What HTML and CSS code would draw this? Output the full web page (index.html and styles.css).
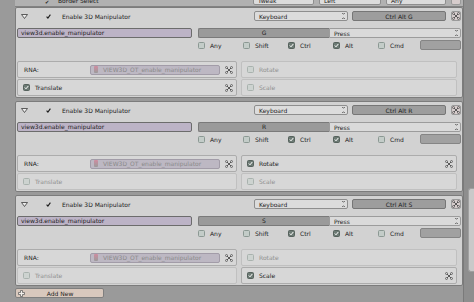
FILE: index.html
```html
<!DOCTYPE html>
<html lang="en">
  <head>
    <meta charset="UTF-8" />
    <title>Keymap Editor</title>
    <link rel="stylesheet" href="styles.css">
  </head>

  <body>
    <div class="editor">
      <div class="list">
        <div class="prev-row">
          <span class="prev-check">&#10004;</span>
          <span class="prev-name">Border Select</span>
          <span class="menu menu-tweak">Tweak</span>
          <span class="menu menu-left">Left</span>
          <span class="menu menu-any">Any</span>
          <span class="xbtn"></span>
        </div>

        <!-- item: translate -->
        <div class="item">
          <div class="item-head">
            <svg class="tri" width="7" height="5" viewBox="0 0 7 5"><polygon points="0.5,0.5 6.5,0.5 3.5,4.5" fill="#ededed" stroke="#3a3a3a" stroke-width="0.8"/></svg>
            <svg class="tick" width="5" height="5" viewBox="0 0 5 5"><path d="M0.6 2.6 L1.9 4.1 L4.4 0.6" fill="none" stroke="#1a1a1a" stroke-width="1.1"/></svg>
            <span class="item-name">Enable 3D Manipulator</span>
            <span class="menu menu-type">Keyboard<i class="updown"></i></span>
            <span class="btn btn-combo">Ctrl Alt G</span>
            <span class="xbtn"><svg width="8" height="8" viewBox="0 0 8 8"><path d="M2 2 L6 6 M6 2 L2 6" stroke="#4a4a4a" stroke-width="0.9"/><circle cx="1.5" cy="1.5" r="1" fill="none" stroke="#4a4a4a" stroke-width="0.7"/><circle cx="6.5" cy="1.5" r="1" fill="none" stroke="#4a4a4a" stroke-width="0.7"/><circle cx="1.5" cy="6.5" r="1" fill="none" stroke="#4a4a4a" stroke-width="0.7"/><circle cx="6.5" cy="6.5" r="1" fill="none" stroke="#4a4a4a" stroke-width="0.7"/></svg></span>
          </div>
          <div class="key-row">
            <span class="idname">view3d.enable_manipulator</span>
            <span class="keybtn">G</span>
            <span class="menu menu-press">Press<i class="updown"></i></span>
          </div>
          <div class="mods">
            <label class="opt"><i class="cb"></i>Any</label>
            <label class="opt"><i class="cb"></i>Shift</label>
            <label class="opt"><i class="cb on"></i>Ctrl</label>
            <label class="opt"><i class="cb on"></i>Alt</label>
            <label class="opt"><i class="cb"></i>Cmd</label>
            <span class="keymod"></span>
          </div>
          <div class="props">
            <div class="col col-left">
              <div class="prop">
                <span class="rna-label">RNA:</span>
                <span class="rna-field"><i class="op-icon"></i>VIEW3D_OT_enable_manipulator</span>
                <span class="xicon"><svg width="8" height="8" viewBox="0 0 8 8"><path d="M2 2 L6 6 M6 2 L2 6" stroke="#4a4a4a" stroke-width="0.9"/><circle cx="1.5" cy="1.5" r="1" fill="none" stroke="#4a4a4a" stroke-width="0.7"/><circle cx="6.5" cy="1.5" r="1" fill="none" stroke="#4a4a4a" stroke-width="0.7"/><circle cx="1.5" cy="6.5" r="1" fill="none" stroke="#4a4a4a" stroke-width="0.7"/><circle cx="6.5" cy="6.5" r="1" fill="none" stroke="#4a4a4a" stroke-width="0.7"/></svg></span>
              </div>
              <div class="prop">
                <label class="opt"><i class="cb on"></i>Translate</label>
                <span class="xicon"><svg width="8" height="8" viewBox="0 0 8 8"><path d="M2 2 L6 6 M6 2 L2 6" stroke="#4a4a4a" stroke-width="0.9"/><circle cx="1.5" cy="1.5" r="1" fill="none" stroke="#4a4a4a" stroke-width="0.7"/><circle cx="6.5" cy="1.5" r="1" fill="none" stroke="#4a4a4a" stroke-width="0.7"/><circle cx="1.5" cy="6.5" r="1" fill="none" stroke="#4a4a4a" stroke-width="0.7"/><circle cx="6.5" cy="6.5" r="1" fill="none" stroke="#4a4a4a" stroke-width="0.7"/></svg></span>
              </div>
            </div>
            <div class="col col-right">
              <div class="prop off"><label class="opt"><i class="cb"></i>Rotate</label></div>
              <div class="prop off"><label class="opt"><i class="cb"></i>Scale</label></div>
            </div>
          </div>
        </div>

        <!-- item: rotate -->
        <div class="item">
          <div class="item-head">
            <svg class="tri" width="7" height="5" viewBox="0 0 7 5"><polygon points="0.5,0.5 6.5,0.5 3.5,4.5" fill="#ededed" stroke="#3a3a3a" stroke-width="0.8"/></svg>
            <svg class="tick" width="5" height="5" viewBox="0 0 5 5"><path d="M0.6 2.6 L1.9 4.1 L4.4 0.6" fill="none" stroke="#1a1a1a" stroke-width="1.1"/></svg>
            <span class="item-name">Enable 3D Manipulator</span>
            <span class="menu menu-type">Keyboard<i class="updown"></i></span>
            <span class="btn btn-combo">Ctrl Alt R</span>
            <span class="xbtn"><svg width="8" height="8" viewBox="0 0 8 8"><path d="M2 2 L6 6 M6 2 L2 6" stroke="#4a4a4a" stroke-width="0.9"/><circle cx="1.5" cy="1.5" r="1" fill="none" stroke="#4a4a4a" stroke-width="0.7"/><circle cx="6.5" cy="1.5" r="1" fill="none" stroke="#4a4a4a" stroke-width="0.7"/><circle cx="1.5" cy="6.5" r="1" fill="none" stroke="#4a4a4a" stroke-width="0.7"/><circle cx="6.5" cy="6.5" r="1" fill="none" stroke="#4a4a4a" stroke-width="0.7"/></svg></span>
          </div>
          <div class="key-row">
            <span class="idname">view3d.enable_manipulator</span>
            <span class="keybtn">R</span>
            <span class="menu menu-press">Press<i class="updown"></i></span>
          </div>
          <div class="mods">
            <label class="opt"><i class="cb"></i>Any</label>
            <label class="opt"><i class="cb"></i>Shift</label>
            <label class="opt"><i class="cb on"></i>Ctrl</label>
            <label class="opt"><i class="cb on"></i>Alt</label>
            <label class="opt"><i class="cb"></i>Cmd</label>
            <span class="keymod"></span>
          </div>
          <div class="props">
            <div class="col col-left">
              <div class="prop">
                <span class="rna-label">RNA:</span>
                <span class="rna-field"><i class="op-icon"></i>VIEW3D_OT_enable_manipulator</span>
                <span class="xicon"><svg width="8" height="8" viewBox="0 0 8 8"><path d="M2 2 L6 6 M6 2 L2 6" stroke="#4a4a4a" stroke-width="0.9"/><circle cx="1.5" cy="1.5" r="1" fill="none" stroke="#4a4a4a" stroke-width="0.7"/><circle cx="6.5" cy="1.5" r="1" fill="none" stroke="#4a4a4a" stroke-width="0.7"/><circle cx="1.5" cy="6.5" r="1" fill="none" stroke="#4a4a4a" stroke-width="0.7"/><circle cx="6.5" cy="6.5" r="1" fill="none" stroke="#4a4a4a" stroke-width="0.7"/></svg></span>
              </div>
              <div class="prop off"><label class="opt"><i class="cb"></i>Translate</label></div>
            </div>
            <div class="col col-right">
              <div class="prop">
                <label class="opt"><i class="cb on"></i>Rotate</label>
                <span class="xicon"><svg width="8" height="8" viewBox="0 0 8 8"><path d="M2 2 L6 6 M6 2 L2 6" stroke="#4a4a4a" stroke-width="0.9"/><circle cx="1.5" cy="1.5" r="1" fill="none" stroke="#4a4a4a" stroke-width="0.7"/><circle cx="6.5" cy="1.5" r="1" fill="none" stroke="#4a4a4a" stroke-width="0.7"/><circle cx="1.5" cy="6.5" r="1" fill="none" stroke="#4a4a4a" stroke-width="0.7"/><circle cx="6.5" cy="6.5" r="1" fill="none" stroke="#4a4a4a" stroke-width="0.7"/></svg></span>
              </div>
              <div class="prop off"><label class="opt"><i class="cb"></i>Scale</label></div>
            </div>
          </div>
        </div>

        <!-- item: scale -->
        <div class="item">
          <div class="item-head">
            <svg class="tri" width="7" height="5" viewBox="0 0 7 5"><polygon points="0.5,0.5 6.5,0.5 3.5,4.5" fill="#ededed" stroke="#3a3a3a" stroke-width="0.8"/></svg>
            <svg class="tick" width="5" height="5" viewBox="0 0 5 5"><path d="M0.6 2.6 L1.9 4.1 L4.4 0.6" fill="none" stroke="#1a1a1a" stroke-width="1.1"/></svg>
            <span class="item-name">Enable 3D Manipulator</span>
            <span class="menu menu-type">Keyboard<i class="updown"></i></span>
            <span class="btn btn-combo">Ctrl Alt S</span>
            <span class="xbtn"><svg width="8" height="8" viewBox="0 0 8 8"><path d="M2 2 L6 6 M6 2 L2 6" stroke="#4a4a4a" stroke-width="0.9"/><circle cx="1.5" cy="1.5" r="1" fill="none" stroke="#4a4a4a" stroke-width="0.7"/><circle cx="6.5" cy="1.5" r="1" fill="none" stroke="#4a4a4a" stroke-width="0.7"/><circle cx="1.5" cy="6.5" r="1" fill="none" stroke="#4a4a4a" stroke-width="0.7"/><circle cx="6.5" cy="6.5" r="1" fill="none" stroke="#4a4a4a" stroke-width="0.7"/></svg></span>
          </div>
          <div class="key-row">
            <span class="idname">view3d.enable_manipulator</span>
            <span class="keybtn">S</span>
            <span class="menu menu-press">Press<i class="updown"></i></span>
          </div>
          <div class="mods">
            <label class="opt"><i class="cb"></i>Any</label>
            <label class="opt"><i class="cb"></i>Shift</label>
            <label class="opt"><i class="cb on"></i>Ctrl</label>
            <label class="opt"><i class="cb on"></i>Alt</label>
            <label class="opt"><i class="cb"></i>Cmd</label>
            <span class="keymod"></span>
          </div>
          <div class="props">
            <div class="col col-left">
              <div class="prop">
                <span class="rna-label">RNA:</span>
                <span class="rna-field"><i class="op-icon"></i>VIEW3D_OT_enable_manipulator</span>
                <span class="xicon"><svg width="8" height="8" viewBox="0 0 8 8"><path d="M2 2 L6 6 M6 2 L2 6" stroke="#4a4a4a" stroke-width="0.9"/><circle cx="1.5" cy="1.5" r="1" fill="none" stroke="#4a4a4a" stroke-width="0.7"/><circle cx="6.5" cy="1.5" r="1" fill="none" stroke="#4a4a4a" stroke-width="0.7"/><circle cx="1.5" cy="6.5" r="1" fill="none" stroke="#4a4a4a" stroke-width="0.7"/><circle cx="6.5" cy="6.5" r="1" fill="none" stroke="#4a4a4a" stroke-width="0.7"/></svg></span>
              </div>
              <div class="prop off"><label class="opt"><i class="cb"></i>Translate</label></div>
            </div>
            <div class="col col-right">
              <div class="prop off"><label class="opt"><i class="cb"></i>Rotate</label></div>
              <div class="prop">
                <label class="opt"><i class="cb on"></i>Scale</label>
                <span class="xicon"><svg width="8" height="8" viewBox="0 0 8 8"><path d="M2 2 L6 6 M6 2 L2 6" stroke="#4a4a4a" stroke-width="0.9"/><circle cx="1.5" cy="1.5" r="1" fill="none" stroke="#4a4a4a" stroke-width="0.7"/><circle cx="6.5" cy="1.5" r="1" fill="none" stroke="#4a4a4a" stroke-width="0.7"/><circle cx="1.5" cy="6.5" r="1" fill="none" stroke="#4a4a4a" stroke-width="0.7"/><circle cx="6.5" cy="6.5" r="1" fill="none" stroke="#4a4a4a" stroke-width="0.7"/></svg></span>
              </div>
            </div>
          </div>
        </div>

        <button class="add-new" type="button">
          <svg width="7" height="7" viewBox="0 0 7 7"><path d="M2.5 0.5 H4.5 V2.5 H6.5 V4.5 H4.5 V6.5 H2.5 V4.5 H0.5 V2.5 H2.5 Z" fill="#f2eeea" stroke="#555" stroke-width="0.7"/></svg>
          <span>Add New</span>
        </button>
      </div>
      <div class="scroll">
        <div class="scroll-thumb"></div>
      </div>
    </div>
  </body>
</html>
```

FILE: styles.css
```css
* {
  box-sizing: border-box;
}

body {
  margin: 0;
  background-color: #9a9a9a;
  font-family: "DejaVu Sans", sans-serif;
  font-size: 6px;
  color: #1c1c1c;
}

.editor {
  display: flex;
  width: 474px;
  height: 302px;
  overflow: hidden;
}

.list {
  width: 463px;
  padding-left: 15px;
  flex-shrink: 0;
}

/* the row of the item above, cut off at the top */
.prev-row {
  display: flex;
  align-items: flex-end;
  height: 7px;
  overflow: hidden;
  background-color: #b1b1b1;
  border-bottom: 1px solid #828282;
  padding-bottom: 1px;
}

.prev-check {
  margin-left: 30px;
  width: 12px;
  font-size: 5px;
}

.prev-name {
  flex: 1;
  margin-left: 1px;
  line-height: 6px;
  margin-bottom: 1px;
}

.prev-row .menu {
  height: 10px;
  margin-right: 5px;
}

.menu-tweak { width: 61px; }
.menu-left { width: 62px; }
.menu-any { width: 60px; }

.prev-row .xbtn {
  height: 10px;
  margin-right: 2px;
}

/* keymap item */
.item {
  margin-top: 0;
  margin-bottom: 3px;
  border: 1px solid #7c7c7c;
  border-radius: 2px;
  background-color: #d2d2d2;
  padding: 0 1px 1px 1px;
}

.item-head {
  display: flex;
  align-items: center;
  height: 16px;
}

.tri {
  margin-left: 4px;
}

.tick {
  margin-left: 18px;
}

.item-name {
  flex: 1;
  margin-left: 11px;
}

.menu {
  display: flex;
  align-items: center;
  height: 10px;
  padding: 0 2px 0 4px;
  background-color: #dcdcdc;
  border: 1px solid #8e8e8e;
  border-radius: 2px;
  color: #1c1c1c;
}

.menu-type {
  width: 94px;
  margin-right: 4px;
}

.updown {
  margin-left: auto;
  width: 3px;
  height: 6px;
  background:
    linear-gradient(to top right, transparent 50%, #777 50%) top left / 1.5px 2px no-repeat,
    linear-gradient(to top left, transparent 50%, #777 50%) top right / 1.5px 2px no-repeat,
    linear-gradient(to bottom right, transparent 50%, #777 50%) bottom left / 1.5px 2px no-repeat,
    linear-gradient(to bottom left, transparent 50%, #777 50%) bottom right / 1.5px 2px no-repeat;
}

.btn {
  display: flex;
  align-items: center;
  justify-content: center;
  height: 10px;
  background-color: #9d9d9d;
  border: 1px solid #767676;
  border-radius: 2px;
}

.btn-combo {
  width: 94px;
  margin-right: 5px;
}

.xbtn {
  display: flex;
  align-items: center;
  justify-content: center;
  width: 10px;
  height: 10px;
  background-color: #d6cccc;
  border: 1px solid #9a9a9a;
  border-radius: 2px;
}

/* idname / key / event */
.key-row {
  display: flex;
  height: 10px;
  margin-top: 4px;
}

.idname {
  width: 175px;
  margin-right: 6px;
  padding-left: 3px;
  line-height: 8px;
  background-color: #bcb3c6;
  border: 1px solid #6c6c6c;
  border-radius: 2px;
}

.keybtn {
  width: 131px;
  text-align: center;
  line-height: 8px;
  background-color: #9a9a9a;
  border: 1px solid #7a7a7a;
  border-right: none;
  border-radius: 2px 0 0 2px;
}

.menu-press {
  flex: 1;
  border-radius: 0 2px 2px 0;
  background-color: #dadada;
  border-color: #9c9c9c;
}

/* modifier checkboxes */
.mods {
  display: grid;
  grid-template-columns: 45px 45px 45px 45px 42px 1fr;
  align-items: center;
  height: 10px;
  margin: 2px 0 0 181px;
}

.opt {
  display: flex;
  align-items: center;
}

.cb {
  width: 7px;
  height: 7px;
  margin-right: 5px;
  background-color: #c3ccc8;
  border: 1px solid #8b9893;
  border-radius: 1.5px;
}

.cb.on {
  background-color: #6c7a74;
  border-color: #56625d;
  background-image: url("data:image/svg+xml,%3Csvg xmlns='http://www.w3.org/2000/svg' viewBox='0 0 5 5'%3E%3Cpath d='M0.8 2.5 L2 3.8 L4.3 1' fill='none' stroke='white' stroke-width='1'/%3E%3C/svg%3E");
  background-size: 5px 5px;
}

.keymod {
  height: 10px;
  background-color: #a1a1a1;
  border: 1px solid #858585;
  border-radius: 2px;
}

/* operator properties */
.props {
  display: flex;
  gap: 4px;
  margin-top: 11px;
}

.col-left {
  width: 220px;
}

.col-right {
  width: 216px;
}

.prop {
  display: flex;
  align-items: center;
  height: 17px;
  margin-bottom: 1px;
  padding: 0 3px 0 5px;
  background-color: #d7d7d7;
  border: 1px solid #acacac;
  border-radius: 2px;
}

.prop:last-child {
  margin-bottom: 0;
}

.prop.off {
  color: #909090;
  border-color: #c0c0c0;
}

.prop.off .cb {
  background-color: #cdd3d0;
  border-color: #a9b2ae;
}

.prop .xicon {
  margin-left: auto;
  display: flex;
}

.rna-label {
  width: 66px;
  margin-left: 1px;
}

.rna-field {
  display: flex;
  align-items: center;
  width: 130px;
  height: 10px;
  padding-left: 3px;
  color: #8a8a8a;
  background-color: #bdb8c3;
  border: 1px solid #a29ca8;
  border-radius: 2px;
}

.op-icon {
  width: 4px;
  height: 7px;
  margin-right: 5px;
  background: linear-gradient(#d08ca0, #9b9b9b);
  border-radius: 1px;
}

/* add new */
.add-new {
  display: flex;
  align-items: center;
  width: 89px;
  height: 10px;
  margin: -1px 0 0 0;
  padding: 0 0 0 2px;
  font-family: "DejaVu Sans", sans-serif;
  font-size: 6px;
  color: #1c1c1c;
  background-color: #d8c8bd;
  border: 1px solid #7f7f7f;
  border-radius: 2px;
}

.add-new span {
  flex: 1;
  text-align: center;
  margin-right: 8px;
}

/* scroll region */
.scroll {
  flex: 1;
  display: flex;
  justify-content: flex-end;
  align-items: flex-end;
  padding-bottom: 30px;
  background-color: #8e8e8e;
  border-left: 1px solid #7a7a7a;
}

.scroll-thumb {
  width: 6px;
  height: 84px;
  background-color: #c9c9c9;
  border: 1px solid #a0a0a0;
  border-right: none;
  border-radius: 3px 0 0 3px;
}
```
